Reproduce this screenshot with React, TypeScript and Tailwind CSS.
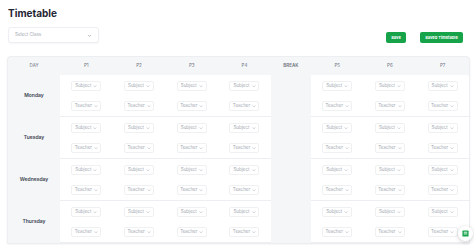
const days = ["Monday", "Tuesday", "Wednesday", "Thursday"];
const before = ["P1", "P2", "P3", "P4"];
const after = ["P5", "P6", "P7"];

function Chevron({ size = 4 }: { size?: number }) {
  return (
    <svg width={size} height={size} viewBox="0 0 8 8" className="shrink-0">
      <path d="M1.5 3 L4 5.5 L6.5 3" fill="none" stroke="#a3a9b2" strokeWidth="1.2" />
    </svg>
  );
}

function Pill({ label }: { label: string }) {
  return (
    <div className="flex h-[10px] w-[30px] items-center justify-center gap-[2px] rounded-[2px] border border-[#eef0f2] bg-white text-[4.5px] leading-none text-[#a3a9b2]">
      <span className="pt-[1px]">{label}</span>
      <Chevron />
    </div>
  );
}

function PeriodCell() {
  return (
    <div className="flex h-[42px] flex-col items-center justify-center gap-[10px] border-b border-[#eceef1] bg-white">
      <Pill label="Subject" />
      <Pill label="Teacher" />
    </div>
  );
}

export default function App() {
  return (
    <div className="relative h-[245px] w-[474px] overflow-hidden bg-white font-['Inter',sans-serif]">
      <div className="px-[7px] pt-[6px]">
        <h1 className="ml-[1px] text-[10px] font-bold leading-[14px] text-[#1f2533]">Timetable</h1>

        <div className="mt-[7px] flex items-start justify-between">
          <div className="ml-[1px] flex h-[16px] w-[91px] items-center justify-between rounded-[3px] border border-[#eceef1] bg-white px-[6px] text-[4.5px] leading-none text-[#a3a9b2] shadow-[0_1px_2px_rgba(0,0,0,0.04)]">
            <span className="pt-[1px]">Select Class</span>
            <Chevron size={5} />
          </div>
          <div className="mr-[4px] mt-[5px] flex gap-[14px]">
            <button className="flex h-[11px] w-[20px] items-center justify-center rounded-[2px] bg-[#16a34a] text-[4px] font-bold leading-none text-white">
              Save
            </button>
            <button className="flex h-[11px] w-[43px] items-center justify-center rounded-[2px] bg-[#16a34a] text-[4px] font-bold leading-none text-white">
              Saved Timetable
            </button>
          </div>
        </div>

        <div className="mt-[13px] w-[463px] overflow-hidden rounded-t-[4px] border border-[#eceef1] bg-[#f5f6f8] shadow-[0_1px_3px_rgba(0,0,0,0.05)]">
          <div className="grid grid-cols-[52px_repeat(4,1fr)_40px_repeat(3,1fr)]">
            <div className="flex h-[18px] items-center justify-center text-[4.5px] text-[#6b7280]">DAY</div>
            {before.map((p) => (
              <div key={p} className="flex h-[18px] items-center justify-center text-[4.5px] text-[#6b7280]">{p}</div>
            ))}
            <div className="flex h-[18px] items-center justify-center text-[4.5px] font-semibold text-[#6b7280]">BREAK</div>
            {after.map((p) => (
              <div key={p} className="flex h-[18px] items-center justify-center text-[4.5px] text-[#6b7280]">{p}</div>
            ))}

            {days.map((d) => (
              <div key={d} className="contents">
                <div className="flex h-[42px] items-center justify-center text-[5px] font-semibold text-[#3b4250]">{d}</div>
                {before.map((p) => (
                  <PeriodCell key={p} />
                ))}
                <div className="h-[42px] bg-[#f5f6f8]" />
                {after.map((p) => (
                  <PeriodCell key={p} />
                ))}
              </div>
            ))}
          </div>
        </div>
      </div>

      <div className="absolute left-[458px] top-[226px] flex h-[15px] w-[15px] items-center justify-center rounded-full bg-white shadow-[0_1px_4px_rgba(0,0,0,0.2)]">
        <svg width="7" height="7" viewBox="0 0 8 8">
          <rect x="0.5" y="0.5" width="7" height="7" rx="1" fill="#16a34a" />
          <rect x="2" y="2" width="4" height="1" fill="white" />
          <rect x="2" y="4" width="4" height="1" fill="white" />
        </svg>
      </div>
    </div>
  );
}
